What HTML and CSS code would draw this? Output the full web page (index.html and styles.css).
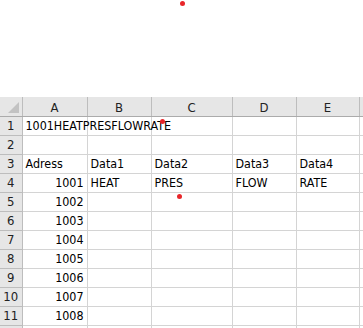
FILE: index.html
```html
<!DOCTYPE html>
<html lang="en">
  <head>
    <meta charset="UTF-8" />
    <title>Sheet</title>
    <link rel="stylesheet" href="styles.css">
  </head>
  <body>
    <div class="page">
      <span class="dot dot-top"></span>
      <span class="dot dot-a1"></span>
      <span class="dot dot-c5"></span>
      <table class="sheet">
        <colgroup>
          <col class="c-rh" /><col class="c-a" /><col class="c-b" /><col class="c-c" /><col class="c-d" /><col class="c-e" /><col />
        </colgroup>
        <tr class="colhead">
          <th class="corner"><span class="tri"></span></th>
          <th>A</th><th>B</th><th>C</th><th>D</th><th>E</th><th></th>
        </tr>
        <tr><th>1</th><td class="spill">1001HEATPRESFLOWRATE</td><td></td><td></td><td></td><td></td><td></td></tr>
        <tr><th>2</th><td></td><td></td><td></td><td></td><td></td><td></td></tr>
        <tr><th>3</th><td>Adress</td><td>Data1</td><td>Data2</td><td>Data3</td><td>Data4</td><td></td></tr>
        <tr><th>4</th><td class="num">1001</td><td>HEAT</td><td>PRES</td><td>FLOW</td><td>RATE</td><td></td></tr>
        <tr><th>5</th><td class="num">1002</td><td></td><td></td><td></td><td></td><td></td></tr>
        <tr><th>6</th><td class="num">1003</td><td></td><td></td><td></td><td></td><td></td></tr>
        <tr><th>7</th><td class="num">1004</td><td></td><td></td><td></td><td></td><td></td></tr>
        <tr><th>8</th><td class="num">1005</td><td></td><td></td><td></td><td></td><td></td></tr>
        <tr><th>9</th><td class="num">1006</td><td></td><td></td><td></td><td></td><td></td></tr>
        <tr><th>10</th><td class="num">1007</td><td></td><td></td><td></td><td></td><td></td></tr>
        <tr><th>11</th><td class="num">1008</td><td></td><td></td><td></td><td></td><td></td></tr>
        <tr><th></th><td></td><td></td><td></td><td></td><td></td><td></td></tr>
      </table>
    </div>
  </body>
</html>
```
FILE: styles.css
```css
* {
  margin: 0;
  padding: 0;
  box-sizing: border-box;
}
body {
  background: #fff;
  overflow: hidden;
}
.page {
  position: relative;
  width: 363px;
  height: 328px;
  padding-top: 97px;
  overflow: hidden;
}
.dot {
  position: absolute;
  width: 5px;
  height: 5px;
  border-radius: 50%;
  background: #e8262a;
  z-index: 2;
}
.dot-top { left: 180px; top: 1px; }
.dot-a1 { left: 160px; top: 119px; }
.dot-c5 { left: 177px; top: 194px; }

.sheet {
  border-collapse: collapse;
  table-layout: fixed;
  width: 380px;
  font-family: "DejaVu Sans Condensed", "Liberation Sans", sans-serif;
  font-size: 12.4px;
  color: #000;
}
.c-rh { width: 22px; }
.c-a { width: 65px; }
.c-b { width: 64px; }
.c-c { width: 81px; }
.c-d { width: 64px; }
.c-e { width: 63px; }

.sheet tr { height: 19px; }
.sheet td {
  border: 1px solid #d4d4d4;
  padding: 0 3px 1px;
  white-space: nowrap;
  overflow: hidden;
  line-height: 16px;
  vertical-align: bottom;
}
.sheet td.spill { overflow: visible; }
.sheet td.num { text-align: right; }
.sheet th {
  background: #e6e6e6;
  border: 1px solid #bdbdbd;
  border-top: none;
  border-left: none;
  font-weight: normal;
  font-size: 13px;
  color: #222;
  text-align: center;
  line-height: 16px;
  padding-bottom: 1px;
  vertical-align: bottom;
}
.colhead { height: 17px; }
.colhead th {
  border-top: none;
  border-bottom: 1px solid #ababab;
  padding-bottom: 0;
}
.corner {
  position: relative;
}
.tri {
  position: absolute;
  right: 3px;
  bottom: 3px;
  width: 0;
  height: 0;
  border-left: 11px solid transparent;
  border-bottom: 11px solid #c2c2c2;
}
```
